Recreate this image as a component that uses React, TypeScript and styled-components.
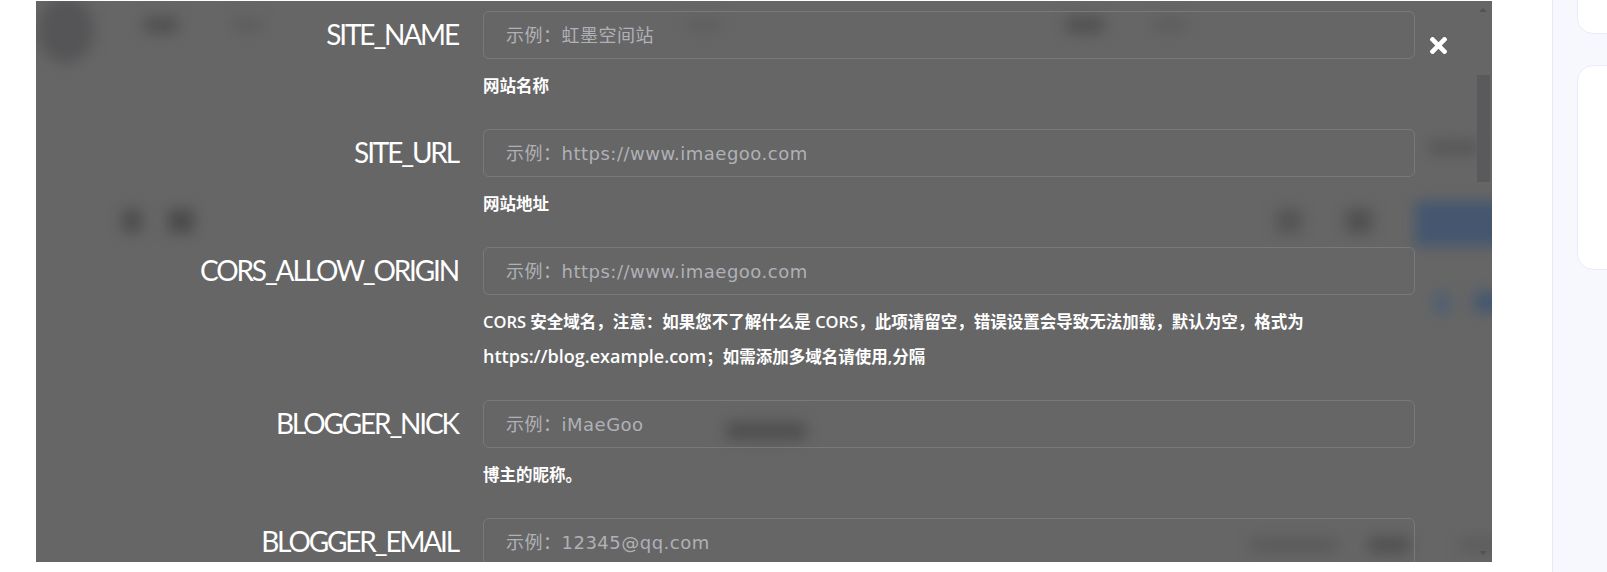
import { ReactNode } from 'react';
import styled, { createGlobalStyle } from 'styled-components';
import { FaTimes } from 'react-icons/fa';

interface Field {
  name: string;
  placeholder: string;
  help?: ReactNode;
}

interface SmudgeSpot {
  x: number;
  y: number;
  w: number;
  h: number;
  color: string;
  round?: boolean;
}

const GlobalStyle = createGlobalStyle`
  html, body {
    margin: 0;
    height: 100%;
    background: #fff;
    overflow: hidden;
  }
  body {
    font-family: Lato, "Noto Sans CJK SC", sans-serif;
  }
`;

const Page = styled.div`
  display: flex;
  width: 1607px;
  height: 572px;
`;

const Content = styled.div`
  flex: 1;
  padding: 1px 60px 10px 36px;
`;

const Modal = styled.div`
  position: relative;
  height: 561px;
  overflow: hidden;
  background: #666;
`;

const Smudge = styled.div<{ $x: number; $y: number; $w: number; $h: number; $color: string; $round?: boolean }>`
  position: absolute;
  left: ${(p) => p.$x}px;
  top: ${(p) => p.$y}px;
  width: ${(p) => p.$w}px;
  height: ${(p) => p.$h}px;
  background: ${(p) => p.$color};
  border-radius: ${(p) => (p.$round ? '50%' : '4px')};
  filter: blur(7px);
`;

const Form = styled.div`
  position: relative;
  padding-top: 10px;
`;

const Row = styled.div`
  display: grid;
  grid-template-columns: 423px 932px;
  column-gap: 24px;
  margin-bottom: 22px;
`;

const Label = styled.label`
  height: 48px;
  padding-right: 1px;
  line-height: 46px;
  text-align: right;
  color: #fff;
  font-size: 28px;
  letter-spacing: -2.15px;
  white-space: nowrap;
`;

const Input = styled.input`
  display: block;
  box-sizing: border-box;
  width: 100%;
  height: 48px;
  padding: 0 22px;
  background: transparent;
  border: 1px solid #797979;
  border-radius: 6px;
  outline: none;
  font-family: "DejaVu Sans", "Noto Sans CJK SC", sans-serif;
  font-size: 18px;
  letter-spacing: 0.5px;
  color: #fff;

  &::placeholder {
    color: #b0b1b6;
    opacity: 1;
  }
`;

const Help = styled.p`
  margin: 9px 0 4px;
  color: #fff;
  font-family: "Open Sans", "Noto Sans CJK SC", sans-serif;
  font-size: 16.5px;
  font-weight: 600;
  line-height: 35px;
`;

const HelpUrl = styled.span`
  font-size: 18px;
  line-height: 0;
`;

const CloseButton = styled.button`
  position: absolute;
  left: 1390px;
  top: 32px;
  display: flex;
  padding: 0;
  background: none;
  border: none;
  color: #fff;
`;

const ScrollArrow = styled.div<{ $down?: boolean }>`
  position: absolute;
  right: 5px;
  ${(p) => (p.$down ? 'bottom: 7px;' : 'top: 7px;')}
  width: 0;
  height: 0;
  border-left: 4px solid transparent;
  border-right: 4px solid transparent;
  ${(p) => (p.$down ? 'border-top' : 'border-bottom')}: 4px solid #535353;
`;

const ScrollThumb = styled.div`
  position: absolute;
  right: 2px;
  top: 74px;
  width: 13px;
  height: 107px;
  background: #5a5a5d;
`;

const Sidebar = styled.aside`
  display: flex;
  flex-direction: column;
  gap: 31px;
  box-sizing: border-box;
  width: 55px;
  height: 572px;
  padding-left: 24px;
  background: #f7f8fe;
  border-left: 1px solid #e6e9f8;
`;

const SideCard = styled.div<{ $top?: boolean }>`
  box-sizing: border-box;
  width: 60px;
  background: #fff;
  border: 1px solid #e9ecf9;
  border-radius: 16px;
  height: ${(p) => (p.$top ? '60px' : '205px')};
  margin-top: ${(p) => (p.$top ? '-26px' : '0')};
`;

const fields: Field[] = [
  { name: 'SITE_NAME', placeholder: '示例：虹墨空间站', help: '网站名称' },
  { name: 'SITE_URL', placeholder: '示例：https://www.imaegoo.com', help: '网站地址' },
  {
    name: 'CORS_ALLOW_ORIGIN',
    placeholder: '示例：https://www.imaegoo.com',
    help: (
      <>
        CORS 安全域名，注意：如果您不了解什么是 CORS，此项请留空，错误设置会导致无法加载，默认为空，格式为{' '}
        <HelpUrl>https://blog.example.com</HelpUrl>；如需添加多域名请使用,分隔
      </>
    ),
  },
  { name: 'BLOGGER_NICK', placeholder: '示例：iMaeGoo', help: '博主的昵称。' },
  { name: 'BLOGGER_EMAIL', placeholder: '示例：12345@qq.com' },
];

// what is left of the page behind the blurred modal
const spots: SmudgeSpot[] = [
  { x: 2, y: -4, w: 56, h: 66, color: '#555557', round: true },
  { x: 108, y: 16, w: 34, h: 16, color: '#505050' },
  { x: 196, y: 18, w: 30, h: 12, color: '#5c5c5c' },
  { x: 650, y: 18, w: 36, h: 12, color: '#5e5e5e' },
  { x: 1030, y: 16, w: 38, h: 16, color: '#505050' },
  { x: 1118, y: 18, w: 32, h: 12, color: '#5c5c5c' },
  { x: 1393, y: 140, w: 50, h: 13, color: '#565656' },
  { x: 86, y: 208, w: 20, h: 24, color: '#4e4e4e' },
  { x: 132, y: 208, w: 26, h: 24, color: '#4b4b4b' },
  { x: 1240, y: 208, w: 26, h: 24, color: '#555555' },
  { x: 1310, y: 208, w: 26, h: 24, color: '#505050' },
  { x: 1379, y: 200, w: 92, h: 45, color: '#44576f' },
  { x: 1398, y: 291, w: 16, h: 22, color: '#4f5f73' },
  { x: 1438, y: 291, w: 30, h: 20, color: '#44576f' },
  { x: 690, y: 421, w: 80, h: 18, color: '#4f4f4f' },
  { x: 1214, y: 537, w: 88, h: 14, color: '#5a5a5a' },
  { x: 1332, y: 536, w: 42, h: 16, color: '#505050' },
  { x: 1424, y: 537, w: 40, h: 14, color: '#5c5c5c' },
];

export default function App() {
  return (
    <Page>
      <GlobalStyle />
      <Content>
        <Modal>
          {spots.map((s) => (
            <Smudge key={`${s.x}-${s.y}`} $x={s.x} $y={s.y} $w={s.w} $h={s.h} $color={s.color} $round={s.round} />
          ))}
          <Form>
            {fields.map((f) => (
              <Row key={f.name}>
                <Label>{f.name}</Label>
                <div>
                  <Input placeholder={f.placeholder} />
                  {f.help && <Help>{f.help}</Help>}
                </div>
              </Row>
            ))}
          </Form>
          <CloseButton aria-label="close">
            <FaTimes size={25} />
          </CloseButton>
          <ScrollArrow />
          <ScrollThumb />
          <ScrollArrow $down />
        </Modal>
      </Content>
      <Sidebar>
        <SideCard $top />
        <SideCard />
      </Sidebar>
    </Page>
  );
}
